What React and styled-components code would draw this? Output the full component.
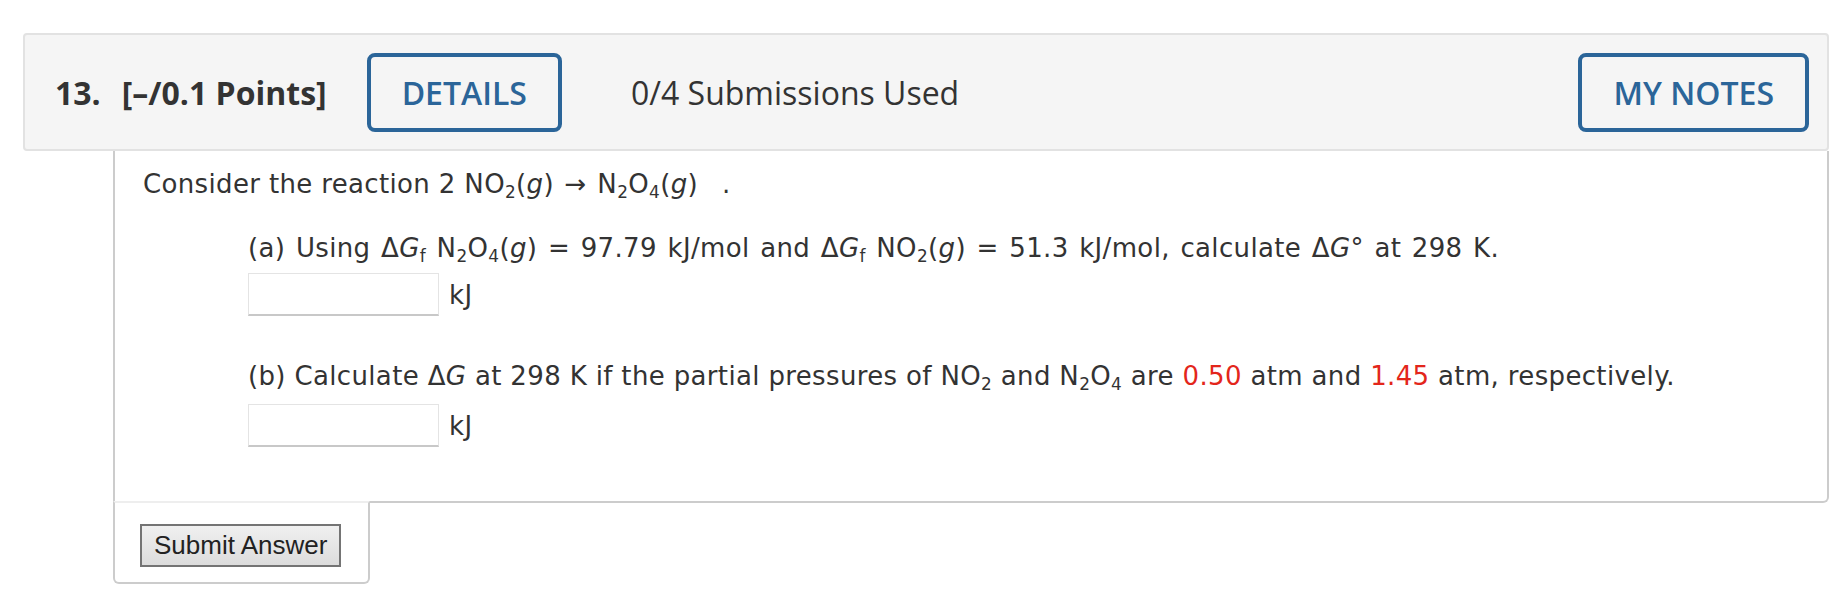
import styled, { createGlobalStyle } from 'styled-components';

const GlobalStyle = createGlobalStyle`
  body {
    margin: 0;
    background: #ffffff;
    color: #333333;
  }
`;

const Page = styled.div`
  padding: 33px 13px 0 23px;
`;

const Question = styled.div`
  width: 1806px;
`;

const Header = styled.div`
  height: 118px;
  box-sizing: border-box;
  display: flex;
  align-items: center;
  padding: 0 18px 0 30px;
  background: #f5f5f5;
  border: 2px solid #e2e2e2;
  border-radius: 4px;
  font-family: "Open Sans", "Liberation Sans", sans-serif;
  font-size: 32px;
  color: #333333;
`;

const Number = styled.span`
  font-weight: 700;
  margin-right: 21px;
`;

const Points = styled.span`
  font-weight: 700;
  margin-right: 40px;
`;

const OutlineButton = styled.button`
  height: 79px;
  box-sizing: border-box;
  padding: 0 31px;
  border: 4px solid #2b6599;
  border-radius: 8px;
  background: transparent;
  font-family: "Open Sans", "Liberation Sans", sans-serif;
  font-size: 32px;
  font-weight: 600;
  color: #2b6599;
  margin-left: ${p => (p.$push ? 'auto' : '0')};
`;

const Submissions = styled.span`
  margin-left: 69px;
`;

const Body = styled.div`
  margin-left: 90px;
  padding: 15px 30px 54px 28px;
  border: 2px solid #cccccc;
  border-top: none;
  border-bottom-right-radius: 6px;
  font-family: "DejaVu Sans", Verdana, sans-serif;
  font-size: 26px;
  letter-spacing: 0.35px;
  color: #333333;
`;

const Line = styled.div`
  line-height: 36px;
  white-space: nowrap;
  word-spacing: ${p => p.$words || 0}px;
`;

const Part = styled.div`
  margin-left: 105px;
  margin-top: ${p => p.$top}px;
`;

const Sub = styled.sub`
  font-size: 0.65em;
  line-height: 0;
  vertical-align: baseline;
  position: relative;
  top: 0.3em;
`;

const Var = styled.i`
  font-style: italic;
`;

const Delta = styled.span`
  font-style: normal;
`;

const Arrow = styled.span`
  margin: 0 2px;
`;

const Period = styled.span`
  margin-left: 24px;
`;

const Red = styled.span`
  color: #e3261b;
`;

const AnswerRow = styled.div`
  display: flex;
  align-items: center;
  margin-top: ${p => p.$top}px;
`;

const AnswerInput = styled.input`
  width: 191px;
  height: 43px;
  box-sizing: border-box;
  border: 1px solid #e4e4e4;
  border-bottom: 2px solid #c8c8c8;
  background: #ffffff;
  margin: 0 10px 0 0;
`;

const Unit = styled.span`
  line-height: 36px;
`;

const SubmitPanel = styled.div`
  margin-left: 90px;
  margin-top: -2px;
  width: 257px;
  box-sizing: border-box;
  padding: 21px 0 15px 25px;
  border: 2px solid #cccccc;
  border-top-color: #eeeeee;
  border-radius: 0 0 6px 6px;
  background: #ffffff;
`;

const SubmitButton = styled.button`
  height: 43px;
  padding: 0 12px;
  border: 2px solid #747474;
  background: linear-gradient(#f0f0f0, #dcdcdc);
  font-family: "Liberation Sans", Arial, sans-serif;
  font-size: 26px;
  color: #222222;
`;

function Formula() {
  return (
    <>
      N<Sub>2</Sub>O<Sub>4</Sub>(<Var>g</Var>)
    </>
  );
}

function Dioxide() {
  return (
    <>
      NO<Sub>2</Sub>(<Var>g</Var>)
    </>
  );
}

export default function App() {
  return (
    <Page>
      <GlobalStyle />
      <Question>
        <Header>
          <Number>13.</Number>
          <Points>[–/0.1 Points]</Points>
          <OutlineButton>DETAILS</OutlineButton>
          <Submissions>0/4 Submissions Used</Submissions>
          <OutlineButton $push>MY NOTES</OutlineButton>
        </Header>
        <Body>
          <Line>
            Consider the reaction 2 <Dioxide /> <Arrow>→</Arrow> <Formula /><Period>.</Period>
          </Line>
          <Part $top={28}>
            <Line $words={2}>
              (a) Using <Delta>Δ</Delta><Var>G</Var><Sub>f</Sub> <Formula /> = 97.79 kJ/mol and{' '}
              <Delta>Δ</Delta><Var>G</Var><Sub>f</Sub> <Dioxide /> = 51.3 kJ/mol, calculate{' '}
              <Delta>Δ</Delta><Var>G</Var>° at 298 K.
            </Line>
            <AnswerRow $top={7}>
              <AnswerInput type="text" />
              <Unit>kJ</Unit>
            </AnswerRow>
          </Part>
          <Part $top={42}>
            <Line>
              (b) Calculate <Delta>Δ</Delta><Var>G</Var> at 298 K if the partial pressures of NO<Sub>2</Sub> and N
              <Sub>2</Sub>O<Sub>4</Sub> are <Red>0.50</Red> atm and <Red>1.45</Red> atm, respectively.
            </Line>
            <AnswerRow $top={10}>
              <AnswerInput type="text" />
              <Unit>kJ</Unit>
            </AnswerRow>
          </Part>
        </Body>
        <SubmitPanel>
          <SubmitButton>Submit Answer</SubmitButton>
        </SubmitPanel>
      </Question>
    </Page>
  );
}
